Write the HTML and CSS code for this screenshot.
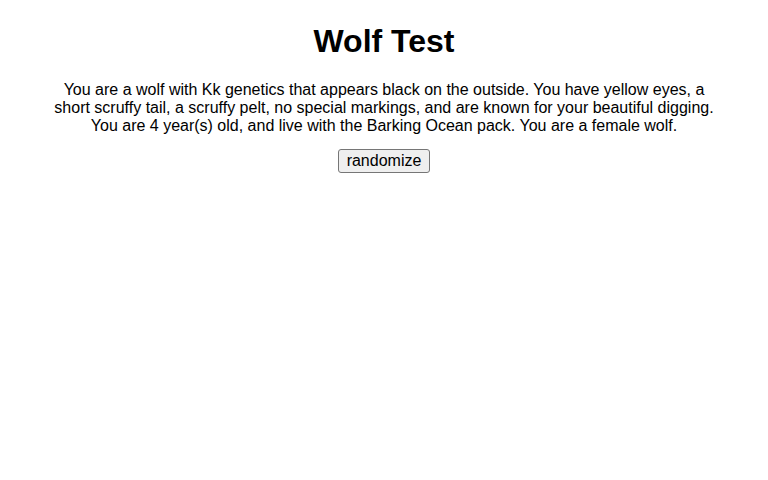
FILE: index.html
```html
<!DOCTYPE html>
<html>
<head>
<meta charset="utf-8">
<link rel="stylesheet" href="styles.css">
</head>
<body>
<main class="page">
<h1 class="title">Wolf Test</h1>
<p class="desc">You are a wolf with Kk genetics that appears black on the outside. You have yellow eyes, a short scruffy tail, a scruffy pelt, no special markings, and are known for your beautiful digging. You are 4 year(s) old, and live with the Barking Ocean pack. You are a female wolf.</p>
<button class="btn">randomize</button>
</main>
</body>
</html>
```
FILE: styles.css
```css
html, body {
  background: #fff;
}
body {
  margin: 0;
  font-family: "Liberation Sans", Arial, sans-serif;
  color: #000;
}
.page {
  text-align: center;
  max-width: 662px;
  margin: 0 auto;
  padding-top: 1px;
}
.title {
  font-size: 32px;
  line-height: 37px;
  font-weight: bold;
  margin: 22px 0 21px;
}
.desc {
  font-size: 16px;
  line-height: 18px;
  margin: 21px 0 14px;
}
.btn {
  font-family: "Liberation Sans", Arial, sans-serif;
  font-size: 16px;
  line-height: 18px;
  color: #000;
  background: #efefef;
  border: 1px solid #767676;
  border-radius: 3px;
  padding: 2px 7.5px;
}
```
